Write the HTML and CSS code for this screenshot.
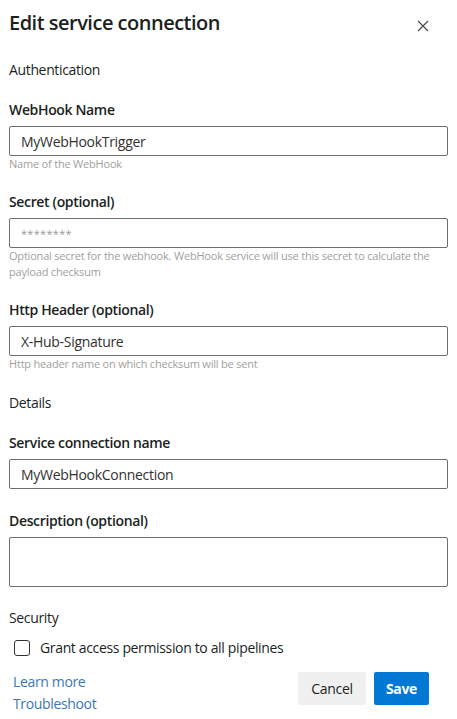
FILE: index.html
```html
<!DOCTYPE html>
<html lang="en">
<head>
<meta charset="utf-8">
<title>Edit service connection</title>
<link rel="stylesheet" href="styles.css">
</head>
<body>
<div class="panel">
  <div class="header">
    <h1 class="title">Edit service connection</h1>
    <button class="close" aria-label="Close">
      <svg width="12" height="12" viewBox="0 0 12 12"><path d="M1 1 L11 11 M11 1 L1 11" stroke="#444" stroke-width="1.1" fill="none"/></svg>
    </button>
  </div>

  <div class="section first">Authentication</div>

  <div class="field">
    <label class="label">WebHook Name</label>
    <input class="input" type="text" value="MyWebHookTrigger">
    <div class="help">Name of the WebHook</div>
  </div>

  <div class="field">
    <label class="label">Secret (optional)</label>
    <input class="input secret" type="text" value="********">
    <div class="help">Optional secret for the webhook. WebHook service will use this secret to calculate the payload checksum</div>
  </div>

  <div class="field">
    <label class="label">Http Header (optional)</label>
    <input class="input" type="text" value="X-Hub-Signature">
    <div class="help">Http header name on which checksum will be sent</div>
  </div>

  <div class="section">Details</div>

  <div class="field">
    <label class="label">Service connection name</label>
    <input class="input" type="text" value="MyWebHookConnection">
  </div>

  <div class="field desc">
    <label class="label">Description (optional)</label>
    <textarea class="input textarea"></textarea>
  </div>

  <div class="section">Security</div>

  <label class="check-row">
    <span class="checkbox"></span>
    <span class="check-label">Grant access permission to all pipelines</span>
  </label>

  <div class="footer">
    <div class="links">
      <a href="#" class="link">Learn more</a>
      <a href="#" class="link">Troubleshoot</a>
    </div>
    <div class="buttons">
      <button class="btn btn-cancel">Cancel</button>
      <button class="btn btn-save">Save</button>
    </div>
  </div>
</div>
</body>
</html>
```

FILE: styles.css
```css
* { box-sizing: border-box; }
html, body { margin: 0; padding: 0; background: #fff; }
body {
  font-family: "Open Sans", "Noto Sans", "Liberation Sans", sans-serif;
  color: #201f1e;
  font-size: 14px;
  letter-spacing: -0.35px;
}
.panel {
  width: 457px;
  height: 719px;
  padding: 0 9px;
  display: flex;
  flex-direction: column;
}
.header {
  display: flex;
  justify-content: space-between;
  align-items: center;
  height: 44px;
  padding-top: 2px;
}
.title {
  margin: 0;
  font-size: 20px;
  font-weight: 600;
  line-height: 28px;
  letter-spacing: -0.5px;
}
.close {
  border: 0;
  background: transparent;
  padding: 0;
  width: 12px;
  height: 12px;
  margin-right: 19px;
  margin-top: 6px;
  display: flex;
}
.section {
  margin-top: 21px;
  line-height: 20px;
  font-size: 14px;
}
.section.first { margin-top: 16px; }
.field {
  margin-top: 20px;
  display: flex;
  flex-direction: column;
}
.field.desc { margin-top: 22px; }
.label {
  font-weight: 600;
  line-height: 20px;
  margin-bottom: 6px;
}
.input {
  width: 100%;
  height: 30px;
  border: 1px solid #6e6e6e;
  border-radius: 2px;
  padding: 0 11px;
  font-family: inherit;
  font-size: 14px;
  letter-spacing: -0.3px;
  color: #323130;
  outline: none;
  background: #fff;
}
.secret {
  color: #9a9a9a;
  font-size: 11px;
  letter-spacing: 0.3px;
}
.textarea {
  height: 50px;
  resize: none;
  display: block;
}
.help {
  font-size: 11px;
  line-height: 16px;
  color: #a19f9d;
  letter-spacing: -0.2px;
}
.check-row {
  display: flex;
  align-items: center;
  margin-top: 10px;
  height: 20px;
  padding-left: 5px;
}
.checkbox {
  width: 16px;
  height: 16px;
  border: 1px solid #323130;
  border-radius: 3px;
  margin-right: 10px;
}
.check-label { line-height: 20px; }
.footer {
  margin-top: 13px;
  display: flex;
  justify-content: space-between;
  align-items: flex-start;
}
.links {
  display: flex;
  flex-direction: column;
  padding-left: 4px;
}
.link {
  color: #3a78b4;
  text-decoration: none;
  line-height: 22px;
}
.buttons {
  display: flex;
  gap: 8px;
  margin-right: 19px;
  margin-top: 1px;
}
.btn {
  height: 33px;
  border: 0;
  border-radius: 2px;
  font-family: inherit;
  font-size: 14px;
  letter-spacing: -0.3px;
  padding: 0;
}
.btn-cancel {
  background: #f0f0f0;
  color: #201f1e;
  width: 68px;
}
.btn-save {
  background: #0078d4;
  color: #fff;
  font-weight: 700;
  width: 55px;
}
```
